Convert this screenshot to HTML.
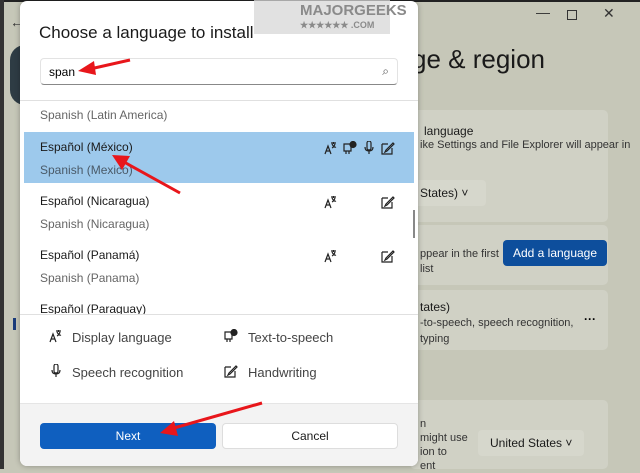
<!DOCTYPE html>
<html><head><style>
*{margin:0;padding:0;box-sizing:border-box}
body{width:640px;height:469px;overflow:hidden;background:#c6c7b8;font-family:"Liberation Sans",sans-serif;position:relative}
.a{position:absolute}
.card{position:absolute;background:#d0d1c5;border-radius:5px}
.t{font-size:12px;color:#1a1a1a}
.s{font-size:12px;color:#666}
svg.i{position:absolute;fill:none;stroke:#222;stroke-width:1.2}
</style></head><body>
<div class="a" style="left:0;top:0;width:640px;height:2px;background:#222"></div>
<div class="a" style="left:0;top:0;width:4px;height:469px;background:#333"></div>
<div class="a" style="left:10px;top:45px;width:30px;height:60px;border-radius:30px;background:#2e3c44"></div>
<div class="a" style="left:13px;top:318px;width:3px;height:12px;background:#1a3b7a"></div>
<div class="a" style="left:10px;top:14px;font-size:14px;color:#333">←</div>
<div class="a" style="left:536px;top:4px;font-size:14px;color:#333">—</div>
<div class="a" style="left:567px;top:10px;width:10px;height:10px;border:1px solid #333"></div>
<div class="a" style="left:603px;top:5px;font-size:14px;color:#333">✕</div>
<div class="a" style="left:412px;top:44px;font-size:26px;color:#1a1a1a">ge &amp; region</div>
<div class="card" style="left:410px;top:110px;width:198px;height:112px"></div>
<div class="a" style="left:424px;top:124px;font-size:12px;color:#1a1a1a">language</div>
<div class="a" style="left:420px;top:139px;font-size:11px;color:#333">ike Settings and File Explorer will appear in</div>
<div class="a" style="left:400px;top:180px;width:86px;height:26px;background:#d6d7cc;border-radius:4px;font-size:12px;padding:6px 0 0 20px;color:#1a1a1a">States) ˅</div>
<div class="card" style="left:410px;top:225px;width:198px;height:60px"></div>
<div class="a" style="left:420px;top:247px;font-size:11px;color:#333;line-height:15px">ppear in the first<br>list</div>
<div class="a" style="left:503px;top:240px;width:104px;height:26px;background:#0d4e9c;border-radius:4px;color:#fff;font-size:12px;text-align:center;line-height:26px">Add a language</div>
<div class="card" style="left:410px;top:290px;width:198px;height:60px"></div>
<div class="a" style="left:420px;top:300px;font-size:12px;color:#1a1a1a;line-height:15px">tates)<br><span style="font-size:11px;color:#333">-to-speech, speech recognition,<br>typing</span></div>
<div class="a" style="left:584px;top:312px;font-size:12px;font-weight:bold">···</div>
<div class="card" style="left:410px;top:400px;width:198px;height:69px"></div>
<div class="a" style="left:420px;top:417px;font-size:11px;color:#333;line-height:14px">n<br>might use<br>ion to<br>ent</div>
<div class="a" style="left:478px;top:430px;width:106px;height:26px;background:#d6d7cc;border-radius:4px;font-size:12px;padding:6px 0 0 12px;color:#1a1a1a">United States ˅</div>

<div class="a" style="left:20px;top:1px;width:398px;height:465px;background:#fff;border-radius:7px;overflow:hidden;box-shadow:0 0 6px rgba(0,0,0,.3)">
<div class="a" style="left:19px;top:22px;font-size:17px;color:#1a1a1a">Choose a language to install</div>
<div class="a" style="left:20px;top:57px;width:358px;height:27px;border:1px solid #e3e3e3;border-bottom:1px solid #888;border-radius:4px;font-size:12px;padding:6px 8px">span<span style="position:absolute;right:8px;top:5px;color:#555">⌕</span></div>
<div class="a" style="left:0;top:99px;width:398px;height:1px;background:#e0e0e0"></div>
<div class="a s" style="left:20px;top:107px">Spanish (Latin America)</div>
<div class="a" style="left:4px;top:131px;width:390px;height:51px;background:#9dc9ec"></div>
<div class="a t" style="left:20px;top:139px">Español (México)</div>
<div class="a s" style="left:20px;top:162px;color:#4a5a68">Spanish (Mexico)</div>
<div class="a t" style="left:20px;top:193px">Español (Nicaragua)</div>
<div class="a s" style="left:20px;top:216px">Spanish (Nicaragua)</div>
<div class="a t" style="left:20px;top:247px">Español (Panamá)</div>
<div class="a s" style="left:20px;top:270px">Spanish (Panama)</div>
<div class="a t" style="left:20px;top:301px">Español (Paraguay)</div>
<div class="a" style="left:393px;top:209px;width:2px;height:28px;background:#888"></div>
<div class="a" style="left:0;top:313px;width:398px;height:90px;background:#fff;border-top:1px solid #e0e0e0"></div>
<div class="a" style="left:52px;top:329px;font-size:13px;color:#444">Display language</div>
<div class="a" style="left:228px;top:329px;font-size:13px;color:#444">Text-to-speech</div>
<div class="a" style="left:52px;top:364px;font-size:13px;color:#444">Speech recognition</div>
<div class="a" style="left:228px;top:364px;font-size:13px;color:#444">Handwriting</div>
<div class="a" style="left:0;top:402px;width:398px;height:64px;background:#f3f3f3;border-top:1px solid #e5e5e5"></div>
<div class="a" style="left:20px;top:422px;width:176px;height:26px;background:#0f5fbf;border-radius:4px;color:#fff;font-size:12px;text-align:center;line-height:26px">Next</div>
<div class="a" style="left:202px;top:422px;width:176px;height:26px;background:#fff;border:1px solid #ddd;border-radius:4px;color:#1a1a1a;font-size:12px;text-align:center;line-height:24px">Cancel</div>
</div>
<svg width="0" height="0" style="position:absolute"><defs>
<symbol id="dl" viewBox="0 0 14 14"><path d="M1 13L4 5L7 13M2.2 10H5.8M7 2H12M9.5 1V3M8 3Q10 7 12 6M11 3Q10 6 8 7"/></symbol>
<symbol id="tts" viewBox="0 0 14 14"><path d="M1 3H8V10H1ZM3 10V13M6 10V13"/><circle cx="10" cy="3.5" r="3" fill="#222"/></symbol>
<symbol id="mic" viewBox="0 0 14 14"><path d="M5 2A2 2 0 0 1 9 2V7A2 2 0 0 1 5 7ZM3 6Q3 10 7 10Q11 10 11 6M7 10V13"/></symbol>
<symbol id="hw" viewBox="0 0 14 14"><path d="M1 3H7M1 3V13H11V7M5 9L12 2L13 3L6 10L4 11Z"/></symbol>
</defs></svg>
<svg class="i" style="left:324px;top:141px" width="14" height="14"><use href="#dl"/></svg>
<svg class="i" style="left:343px;top:141px" width="14" height="14"><use href="#tts"/></svg>
<svg class="i" style="left:362px;top:141px" width="14" height="14"><use href="#mic"/></svg>
<svg class="i" style="left:381px;top:141px" width="14" height="14"><use href="#hw"/></svg>
<svg class="i" style="left:324px;top:195px" width="14" height="14"><use href="#dl"/></svg>
<svg class="i" style="left:381px;top:195px" width="14" height="14"><use href="#hw"/></svg>
<svg class="i" style="left:324px;top:249px" width="14" height="14"><use href="#dl"/></svg>
<svg class="i" style="left:381px;top:249px" width="14" height="14"><use href="#hw"/></svg>
<svg class="i" style="left:49px;top:329px" width="14" height="14"><use href="#dl"/></svg>
<svg class="i" style="left:224px;top:329px" width="14" height="14"><use href="#tts"/></svg>
<svg class="i" style="left:49px;top:364px" width="14" height="14"><use href="#mic"/></svg>
<svg class="i" style="left:224px;top:364px" width="14" height="14"><use href="#hw"/></svg>
<div class="a" style="left:254px;top:0;width:136px;height:34px;background:rgba(215,215,215,.75);font-weight:bold;font-size:15px;color:#8a8a8a;padding:4px 0 0 46px;line-height:13px">MAJORGEEKS<br><span style="font-size:9px">★★★★★★ .COM</span></div>
<svg class="a" style="left:0;top:0" width="640" height="469">
<g stroke="#e8161b" stroke-width="3" fill="#e8161b">
<line x1="130" y1="60" x2="90" y2="69"/><polygon points="78,71 94,61 96,75" stroke="none"/>
<line x1="180" y1="193" x2="124" y2="162"/><polygon points="112,155 130,156 122,170" stroke="none"/>
<line x1="262" y1="403" x2="174" y2="428"/><polygon points="160,433 174,421 178,436" stroke="none"/>
</g></svg>
</body></html>
